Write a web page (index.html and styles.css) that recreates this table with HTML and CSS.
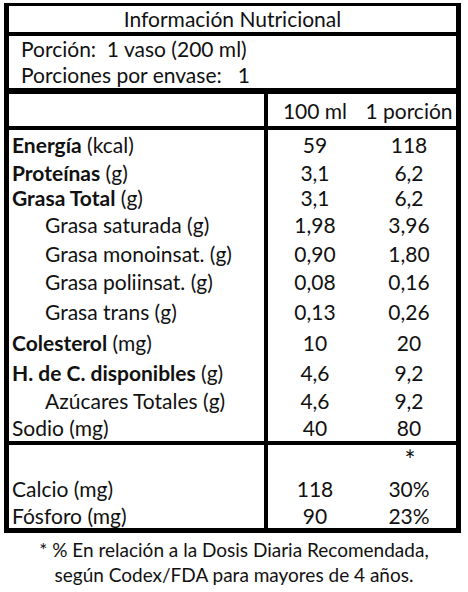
FILE: index.html
```html
<!DOCTYPE html>
<html lang="es">
<head>
<meta charset="utf-8">
<title>Información Nutricional</title>
<link rel="stylesheet" href="styles.css">
</head>
<body>
<div class="panel">
  <div class="title">Información Nutricional</div>
  <div class="serving">
    <div class="sline">Porción:  1 vaso (200 ml)</div>
    <div class="sline">Porciones por envase:   1</div>
  </div>
  <div class="section head">
    <div class="row r-head"><span class="name"></span><span class="v1">100 ml</span><span class="v2">1 porción</span></div>
  </div>
  <div class="section body">
    <div class="row h29"><span class="name"><b>Energía</b> (kcal)</span><span class="v1">59</span><span class="v2">118</span></div>
    <div class="row h26"><span class="name"><b>Proteínas</b> (g)</span><span class="v1">3,1</span><span class="v2">6,2</span></div>
    <div class="row h25"><span class="name"><b>Grasa Total</b> (g)</span><span class="v1">3,1</span><span class="v2">6,2</span></div>
    <div class="row h29"><span class="name sub">Grasa saturada (g)</span><span class="v1">1,98</span><span class="v2">3,96</span></div>
    <div class="row h28"><span class="name sub">Grasa monoinsat. (g)</span><span class="v1">0,90</span><span class="v2">1,80</span></div>
    <div class="row h29"><span class="name sub">Grasa poliinsat. (g)</span><span class="v1">0,08</span><span class="v2">0,16</span></div>
    <div class="row h30"><span class="name sub">Grasa trans (g)</span><span class="v1">0,13</span><span class="v2">0,26</span></div>
    <div class="row h32"><span class="name"><b>Colesterol</b> (mg)</span><span class="v1">10</span><span class="v2">20</span></div>
    <div class="row h28"><span class="name"><b>H. de C. disponibles</b> (g)</span><span class="v1">4,6</span><span class="v2">9,2</span></div>
    <div class="row h28"><span class="name sub">Azúcares Totales (g)</span><span class="v1">4,6</span><span class="v2">9,2</span></div>
    <div class="row h27"><span class="name">Sodio (mg)</span><span class="v1">40</span><span class="v2">80</span></div>
  </div>
  <div class="section minerals">
    <div class="row r-star"><span class="name"></span><span class="v1"></span><span class="v2 star">*</span></div>
    <div class="row h28"><span class="name">Calcio (mg)</span><span class="v1">118</span><span class="v2">30%</span></div>
    <div class="row h26"><span class="name">Fósforo (mg)</span><span class="v1">90</span><span class="v2">23%</span></div>
  </div>
</div>
<p class="note">* % En relación a la Dosis Diaria Recomendada,<br>según Codex/FDA para mayores de 4 años.</p>
</body>
</html>
```

FILE: styles.css
```css
html, body {
  margin: 0;
  padding: 0;
  background: #ffffff;
}

body {
  font-family: Lato, "Open Sans", sans-serif;
  font-size: 21px;
  color: #111111;
}

.panel {
  margin: 3px 0 0 4px;
  width: 447px;
  border: 5px solid #000;
  border-top-width: 3px;
}

.title {
  height: 26px;
  line-height: 26px;
  text-align: center;
  border-bottom: 4px solid #000;
}

.serving {
  height: 52px;
  border-bottom: 6px solid #000;
  padding-left: 12px;
}

.sline {
  height: 26px;
  line-height: 26px;
  white-space: pre;
}

.section {
  display: flex;
  flex-direction: column;
}

.head {
  border-bottom: 4px solid #000;
}

.body {
  border-bottom: 4px solid #000;
}

.row {
  display: grid;
  grid-template-columns: 255px 98px 94px;
  white-space: pre;
}

.row > span {
  display: flex;
  align-items: center;
}

.name {
  padding-left: 3px;
}

.name.sub {
  padding-left: 36px;
}

.v1 {
  border-left: 4px solid #000;
  justify-content: center;
}

.v2 {
  justify-content: center;
}

.r-head { height: 32px; }
.r-star { height: 29px; }
.h25 { height: 25px; }
.h26 { height: 26px; }
.h27 { height: 27px; }
.h28 { height: 28px; }
.h29 { height: 29px; }
.h30 { height: 30px; }
.h32 { height: 32px; }

.row > .star {
  align-items: flex-start;
  font-size: 26px;
  line-height: 21px;
  padding-top: 5px;
  padding-left: 2px;
}

.note {
  margin: 4px 0 0 0;
  width: 468px;
  text-align: center;
  font-size: 19px;
  line-height: 25px;
}
```
